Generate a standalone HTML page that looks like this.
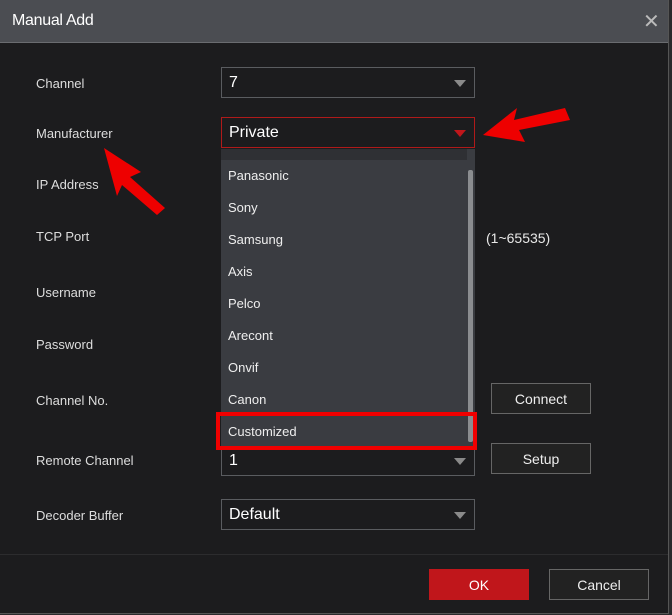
<!DOCTYPE html>
<html><head><style>
body{margin:0;width:672px;height:615px;background:#2a2a2c;position:relative;overflow:hidden;font-family:"Liberation Sans",sans-serif;color:#e8e8e8}
.dlg{position:absolute;left:0;top:0;width:668px;height:613px;background:#1c1c1e;border-right:1px solid #555;border-bottom:1px solid #555}
.title{position:absolute;left:0;top:0;width:668px;height:42px;background:#4b4d52;border-bottom:1px solid #6a6c70}
.title span{position:absolute;left:12px;top:12px;font-size:16px;color:#fff;letter-spacing:-0.3px}
.x{position:absolute;left:643px;top:13px;font-size:20px;color:#bbb;line-height:18px;font-weight:100}
.lbl{position:absolute;left:36px;font-size:13px;color:#ddd}
.sel{position:absolute;left:221px;width:252px;height:29px;border:1px solid #5a5c60;background:#1c1c1e}
.sel span{position:absolute;left:7px;top:6px;font-size:16px;color:#fff}
.sel i{position:absolute;right:8px;top:12px;border-left:6px solid transparent;border-right:6px solid transparent;border-top:7px solid #8a8a8a}
.btn{position:absolute;width:98px;height:29px;border:1px solid #666;background:#222;font-size:14px;color:#eee;text-align:center;line-height:31px}
.list{position:absolute;left:221px;top:149px;width:254px;height:298px;background:#3a3c41}
.list .top{position:absolute;left:0;top:0;width:246px;height:11px;background:#2f3034}
.list .it{position:absolute;left:7px;font-size:13px;color:#eee}
.sb{position:absolute;left:247px;top:21px;width:5px;height:272px;background:#8b8d90;border-radius:2px}
</style></head><body>
<div class="dlg">
<div class="title"><span>Manual Add</span><div class="x">✕</div></div>
<div class="lbl" style="top:76px">Channel</div>
<div class="lbl" style="top:126px">Manufacturer</div>
<div class="lbl" style="top:177px">IP Address</div>
<div class="lbl" style="top:229px">TCP Port</div>
<div class="lbl" style="top:285px">Username</div>
<div class="lbl" style="top:337px">Password</div>
<div class="lbl" style="top:393px">Channel No.</div>
<div class="lbl" style="top:453px">Remote Channel</div>
<div class="lbl" style="top:508px">Decoder Buffer</div>
<div class="sel" style="top:67px"><span>7</span><i></i></div>
<div class="sel" style="top:117px;border-color:#b01a1a"><span>Private</span><i style="border-top-color:#c0161b"></i></div>
<div class="sel" style="top:445px"><span>1</span><i></i></div>
<div class="sel" style="top:499px"><span>Default</span><i></i></div>
<div style="position:absolute;left:486px;top:230px;font-size:14px">(1~65535)</div>
<div class="btn" style="left:491px;top:383px">Connect</div>
<div class="btn" style="left:491px;top:443px">Setup</div>
<div style="position:absolute;left:0;top:554px;width:668px;height:1px;background:#2c2c2e"></div>
<div class="btn" style="left:429px;top:569px;background:#c0161b;border-color:#c0161b;color:#fff">OK</div>
<div class="btn" style="left:549px;top:569px">Cancel</div>
<div class="list"><div class="top"></div>
<div class="it" style="top:19px">Panasonic</div>
<div class="it" style="top:51px">Sony</div>
<div class="it" style="top:83px">Samsung</div>
<div class="it" style="top:115px">Axis</div>
<div class="it" style="top:147px">Pelco</div>
<div class="it" style="top:179px">Arecont</div>
<div class="it" style="top:211px">Onvif</div>
<div class="it" style="top:243px">Canon</div>
<div class="it" style="top:275px">Customized</div>
<div class="sb"></div></div>
<div style="position:absolute;left:216px;top:412px;width:253px;height:30px;border:4px solid #f00000"></div>
<svg style="position:absolute;left:0;top:0" width="672" height="615">
<polygon points="483,135 517,108 514,120 565,108 570,120 519,130 525,142" fill="#ee0000"/>
<polygon points="104,148 141,172 130,177 165,208 157,215 122,185 117,196" fill="#ee0000"/>
</svg>
</div>
</body></html>
